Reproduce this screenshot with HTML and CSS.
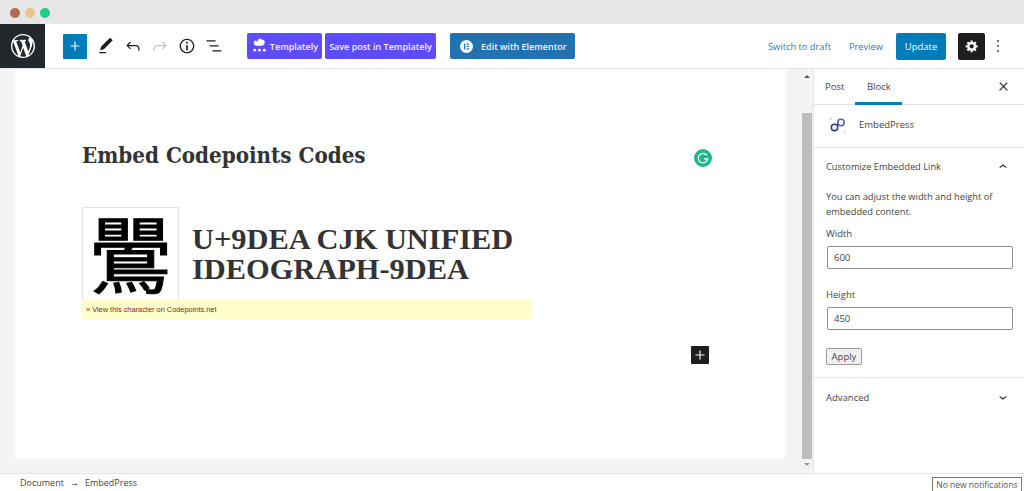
FILE: index.html
```html
<!DOCTYPE html>
<html lang="en">
<head>
  <meta charset="UTF-8" />
  <title>Embed Codepoints Codes</title>
  <link rel="stylesheet" href="styles.css">
</head>
<body>
  <div class="titlebar">
    <span class="light light-red"></span>
    <span class="light light-yellow"></span>
    <span class="light light-green"></span>
  </div>

  <header class="topbar">
    <a class="wp-logo">
      <svg viewBox="0 0 20 20" width="24" height="24"><path fill="#fff" d="M20 10c0-5.51-4.49-10-10-10C4.48 0 0 4.49 0 10c0 5.52 4.48 10 10 10 5.51 0 10-4.48 10-10zM7.78 15.37L4.37 6.22c.55-.02 1.17-.08 1.17-.08.5-.06.44-1.13-.06-1.11 0 0-1.45.11-2.37.11-.18 0-.37 0-.58-.01C4.12 2.69 6.87 1.11 10 1.11c2.33 0 4.45.87 6.05 2.34-.68-.11-1.65.39-1.65 1.58 0 .74.45 1.36.9 2.1.35.61.55 1.36.55 2.46 0 1.49-1.4 5-1.4 5l-3.03-8.37c.54-.02.82-.17.82-.17.5-.05.44-1.25-.06-1.22 0 0-1.44.12-2.38.12-.87 0-2.33-.12-2.33-.12-.5-.03-.56 1.2-.06 1.22l.92.08 1.26 3.41zM17.41 10c.24-.64.74-1.87.43-4.25.7 1.29 1.05 2.71 1.05 4.25 0 3.29-1.73 6.24-4.4 7.78.97-2.59 1.94-5.2 2.92-7.78zM6.1 18.09C3.12 16.65 1.11 13.53 1.11 10c0-1.3.23-2.48.72-3.59C3.25 10.3 4.67 14.2 6.1 18.09zm4.03-6.63l2.58 6.98c-.86.29-1.76.45-2.71.45-.79 0-1.57-.11-2.29-.33.81-2.38 1.62-4.74 2.42-7.1z"/></svg>
    </a>

    <div class="tools">
      <button class="add-btn">
        <svg viewBox="0 0 24 24" width="18" height="18"><path fill="#e8f3f9" d="M18 11.200h-5.200V6h-1.600v5.200H6v1.600h5.200V18h1.600v-5.200H18z"/></svg>
      </button>
      <svg class="tool" viewBox="0 0 24 24" width="20" height="20"><path fill="#1e1e1e" d="M20.100 5.100L16.900 2 6.200 12.700l-1.300 4.400 4.500-1.300L20.100 5.100zM4 20.800h8v-1.500H4v1.500z"/></svg>
      <svg class="tool" viewBox="0 0 24 24" width="20" height="20"><path fill="#1e1e1e" d="M18.300 11.700c-.6-.6-1.400-.9-2.300-.9H6.700l2.900-3.300-1.100-1-4.500 5L8.500 16l1-1-2.700-2.700H16c.5 0 .9.2 1.300.5 1 1 1 3.400 1 4.500v.3h1.500v-.2c0-1.500 0-4.300-1.500-5.700z"/></svg>
      <svg class="tool" viewBox="0 0 24 24" width="20" height="20"><path fill="#c4c7ca" d="M15.600 6.500l-1.100 1 2.900 3.300H8c-.9 0-1.700.3-2.300.9-1.400 1.500-1.400 4.200-1.400 5.600v.2h1.500v-.3c0-1.100 0-3.500 1-4.500.3-.3.7-.5 1.300-.5h9.200L14.500 15l1.100 1.100 4.600-4.600-4.600-5z"/></svg>
      <svg class="tool" viewBox="0 0 24 24" width="20" height="20"><path fill="#1e1e1e" d="M12 3.200c-4.800 0-8.800 3.900-8.800 8.800 0 4.800 3.900 8.800 8.800 8.800 4.800 0 8.800-3.900 8.800-8.800 0-4.800-4-8.800-8.800-8.800zm0 16c-4 0-7.200-3.300-7.200-7.200C4.800 8 8 4.800 12 4.800s7.200 3.300 7.200 7.200c0 4-3.200 7.200-7.200 7.200zM11 17h2v-6h-2v6zm0-8h2V7h-2v2z"/></svg>
      <svg class="tool" viewBox="0 0 24 24" width="20" height="20"><path fill="#1e1e1e" d="M13.800 5.200H3v1.500h10.800V5.200zm-3.600 12v1.500H21v-1.500H10.200zm7.200-6H6.600v1.500h10.800v-1.500z"/></svg>
    </div>

    <button class="purple-btn templately-btn">
      <svg viewBox="0 0 16 16" width="17" height="17"><path fill="#fff" d="M7 1c1-.9 2.300-.5 2.800.4 1.700-.2 3.200 1 3.200 2.700 0 1.800-1.400 3.200-3.200 3.200H5.500C3.800 7.300 2.500 6.200 2.500 4.700c0-1.300 1-2.300 2.200-2.500L6 3.700z"/><circle cx="3.500" cy="11.500" r="1.300" fill="#fff"/><circle cx="8" cy="11.500" r="1.300" fill="#fff"/><circle cx="12.500" cy="11.500" r="1.300" fill="#fff"/></svg>
      Templately
    </button>
    <button class="purple-btn save-btn">Save post in Templately</button>
    <button class="elementor-btn">
      <svg viewBox="0 0 13 13" width="13" height="13"><circle cx="6.500" cy="6.500" r="6.500" fill="#fff"/><path fill="#2271b1" d="M4 3.500h1.200v6H4zM6.500 3.500H9v1.200H6.500zM6.500 5.900H9v1.200H6.500zM6.500 8.300H9v1.200H6.500z"/></svg>
      Edit with Elementor
    </button>

    <div class="actions">
      <a class="link-btn draft-link">Switch to draft</a>
      <a class="link-btn preview-link">Preview</a>
      <button class="update-btn">Update</button>
      <button class="settings-btn">
        <svg viewBox="0 0 20 20" width="14" height="14"><path fill="#fff" d="M18 12h-2.180c-.17.7-.44 1.350-.81 1.930l1.540 1.540-2.100 2.100-1.540-1.540c-.58.36-1.230.63-1.910.79V19H8v-2.180c-.68-.16-1.330-.43-1.910-.79l-1.540 1.540-2.120-2.120 1.540-1.540c-.36-.58-.63-1.230-.79-1.910H1V9.030h2.170c.16-.7.44-1.350.8-1.940L2.430 5.550l2.100-2.100 1.540 1.540c.58-.37 1.240-.64 1.930-.81V2h3v2.180c.68.16 1.330.43 1.910.79l1.540-1.540 2.120 2.120-1.540 1.540c.36.59.64 1.240.8 1.940H18V12zm-8.500 1.500c1.660 0 3-1.340 3-3s-1.340-3-3-3-3 1.340-3 3 1.340 3 3 3z"/></svg>
      </button>
      <svg class="more" viewBox="0 0 24 24" width="20" height="20"><path fill="#1e1e1e" d="M13 19h-2v-2h2v2zm0-6h-2v-2h2v2zm0-6h-2V5h2v2z"/></svg>
    </div>
  </header>

  <div class="main">
    <div class="canvas">
      <div class="paper">
        <h1 class="post-title">Embed Codepoints Codes</h1>
        <span class="grammarly">
          <svg viewBox="0 0 18 18" width="18" height="18"><circle cx="9" cy="9" r="9" fill="#22b88e"/><path fill="none" stroke="#fff" stroke-width="1.200" d="M12.800 6.300A4.700 4.700 0 1 0 13.700 9.800H10"/></svg>
        </span>
        <div class="embed">
          <div class="embed-top">
            <div class="char-box">鷪</div>
            <h2 class="char-name">U+9DEA CJK UNIFIED IDEOGRAPH-9DEA</h2>
          </div>
          <div class="embed-foot">» View this character on Codepoints.net</div>
        </div>
        <button class="inserter">
          <svg viewBox="0 0 24 24" width="18" height="18"><path fill="#eee" d="M18 11.200h-5.200V6h-1.600v5.200H6v1.600h5.200V18h1.600v-5.200H18z"/></svg>
        </button>
      </div>
      <div class="scrollbar">
        <span class="arrow arrow-up"></span>
        <div class="thumb"></div>
        <span class="arrow arrow-down"></span>
      </div>
    </div>

    <aside class="sidebar">
      <div class="tabs">
        <span class="tab">Post</span>
        <span class="tab tab-active">Block</span>
        <svg class="close" viewBox="0 0 24 24" width="13" height="13"><path fill="#1e1e1e" stroke="#1e1e1e" stroke-width=".8" d="M13 11.800l6.100-6.300-1-1-6.100 6.200-6.100-6.200-1 1 6.100 6.300-6.500 6.700 1 1 6.500-6.600 6.500 6.600 1-1z"/></svg>
      </div>
      <div class="block-card">
        <svg viewBox="0 0 18 18" width="18" height="18">
          <circle cx="5.500" cy="11.500" r="3.200" fill="none" stroke="#2f3a8f" stroke-width="1.500"/>
          <circle cx="12" cy="6.500" r="3.200" fill="none" stroke="#5a5fa8" stroke-width="1.500"/>
          <path fill="none" stroke="#3f4a9a" stroke-width="1.500" d="M7.800 9.300l1.800-1.200"/>
          <path fill="none" stroke="#9fb6d8" stroke-width="1" d="M1.500 3.500l1.500-1.500M15 16l1.500-1.500"/>
        </svg>
        <span class="block-name">EmbedPress</span>
      </div>
      <section class="panel">
        <div class="panel-head">
          <span class="panel-title">Customize Embedded Link</span>
          <svg viewBox="0 0 24 24" width="16" height="16"><path fill="#1e1e1e" d="M6.500 12.400L12 8l5.500 4.400-.9 1.200L12 10l-4.500 3.600-1-1.200z"/></svg>
        </div>
        <p class="panel-text">You can adjust the width and height of embedded content.</p>
        <label class="field-label">Width</label>
        <input class="field" type="text" value="600">
        <label class="field-label label-height">Height</label>
        <input class="field" type="text" value="450">
        <button class="apply-btn">Apply</button>
      </section>
      <section class="panel-closed">
        <span>Advanced</span>
        <svg viewBox="0 0 24 24" width="16" height="16"><path fill="#1e1e1e" d="M17.500 11.600L12 16l-5.500-4.400.9-1.200L12 14l4.500-3.600 1 1.200z"/></svg>
      </section>
    </aside>
  </div>

  <footer class="breadcrumbs">
    <span>Document</span>
    <span class="crumb-arrow">→</span>
    <span>EmbedPress</span>
    <span class="tooltip">No new notifications</span>
  </footer>
</body>
</html>
```

FILE: styles.css
```css
* {
  box-sizing: border-box;
}

body {
  margin: 0;
  height: 491px;
  overflow: hidden;
  display: flex;
  flex-direction: column;
  font-family: "Open Sans", "Noto Sans", sans-serif;
  font-size: 10px;
  color: #444;
  background: #fff;
}

button {
  font-family: inherit;
  border: none;
  padding: 0;
}

/* window chrome */
.titlebar {
  height: 24px;
  flex: none;
  background: #e6e6e6;
  display: flex;
  align-items: center;
  gap: 5px;
  padding: 2px 0 0 10px;
}

.light {
  width: 10px;
  height: 10px;
  border-radius: 50%;
}

.light-red { background: #b06a4d; }
.light-yellow { background: #e8c48b; }
.light-green { background: #1fcb8a; }

/* top toolbar */
.topbar {
  height: 45px;
  flex: none;
  display: flex;
  align-items: center;
  border-bottom: 1px solid #e2e4e7;
}

.wp-logo {
  width: 45px;
  height: 44px;
  background: #23282d;
  display: flex;
  align-items: center;
  justify-content: center;
}

.tools {
  display: flex;
  align-items: center;
  margin-left: 18px;
}

.add-btn {
  width: 24px;
  height: 25px;
  border-radius: 1px;
  background: #007cba;
  display: flex;
  align-items: center;
  justify-content: center;
  margin-right: 9px;
}

.tool {
  margin-right: 7px;
}

.purple-btn {
  height: 26px;
  background: #5f4bff;
  color: #f2f0ff;
  border-radius: 2px;
  font-size: 9px;
  font-weight: 600;
  display: flex;
  align-items: center;
  justify-content: center;
}

.templately-btn {
  width: 75px;
  gap: 2px;
  margin-left: 16px;
}

.save-btn {
  width: 111px;
  margin-left: 3px;
}

.elementor-btn {
  width: 125px;
  height: 26px;
  margin-left: 14px;
  background: #2271b1;
  color: #f0f6fb;
  border-radius: 2px;
  font-size: 9px;
  font-weight: 600;
  display: flex;
  align-items: center;
  gap: 8px;
  padding-left: 10px;
}

.actions {
  margin-left: auto;
  display: flex;
  align-items: center;
}

.link-btn {
  color: #2b7ab8;
  font-size: 9.300px;
}

.preview-link {
  margin-left: 18px;
}

.update-btn {
  width: 50px;
  height: 27px;
  margin-left: 13px;
  background: #007cba;
  color: #fff;
  border-radius: 2px;
  font-size: 9.500px;
}

.settings-btn {
  width: 27px;
  height: 27px;
  margin-left: 12px;
  background: #1e1e1e;
  border-radius: 2px;
  display: flex;
  align-items: center;
  justify-content: center;
}

.more {
  margin: 0 16px 0 3px;
}

/* editor area */
.main {
  height: 404px;
  flex: none;
  display: flex;
}

.canvas {
  width: 813px;
  flex: none;
  display: flex;
  align-items: flex-start;
  background: #f4f4f4;
  padding-left: 15px;
}

.paper {
  position: relative;
  width: 771px;
  height: 389px;
  flex: none;
  background: #fff;
  padding: 69px 0 0 67px;
}

.post-title {
  margin: 0;
  font-family: "DejaVu Serif", serif;
  font-stretch: condensed;
  font-size: 22.200px;
  line-height: 34px;
  font-weight: 700;
  color: #333;
}

.grammarly {
  position: absolute;
  left: 679px;
  top: 80px;
  display: flex;
}

.embed {
  width: 449px;
  margin-top: 35px;
}

.embed-top {
  display: flex;
  align-items: center;
  gap: 13px;
  height: 93px;
}

.char-box {
  width: 97px;
  height: 93px;
  flex: none;
  border: 1px solid #e4e4e4;
  border-bottom: none;
  color: #000;
  font-family: "Noto Sans CJK TC", "Noto Sans CJK SC", sans-serif;
  font-weight: 400;
  -webkit-text-stroke: 1px #000;
  font-size: 84px;
  line-height: 86px;
  text-align: center;
}

.char-name {
  margin: 0;
  width: 335px;
  font-family: "Liberation Serif", serif;
  font-size: 30.400px;
  line-height: 30px;
  font-weight: 700;
  color: #333;
}

.embed-foot {
  height: 20px;
  background: #ffc;
  color: #7a1f1f;
  font-family: "Liberation Sans", sans-serif;
  font-size: 7.400px;
  line-height: 20px;
  padding-left: 4px;
}

.inserter {
  display: flex;
  margin: 26px 0 0 609px;
  width: 18px;
  height: 18px;
  background: #1e1e1e;
  border-radius: 1px;
}

.scrollbar {
  width: 27px;
  height: 404px;
  flex: none;
  display: flex;
  flex-direction: column;
  align-items: center;
  padding-left: 16px;
  padding-right: 1px;
}

.thumb {
  width: 10px;
  height: 346px;
  margin-top: 35px;
  background: #bdbdbd;
}

.arrow {
  width: 0;
  height: 0;
  border-left: 3px solid transparent;
  border-right: 3px solid transparent;
}

.arrow-up {
  margin-top: 6px;
  border-bottom: 3px solid #555;
}

.arrow-down {
  margin-top: 4px;
  border-top: 3px solid #999;
}

/* settings sidebar */
.sidebar {
  width: 211px;
  flex: none;
  border-left: 1px solid #e2e4e7;
  color: #444;
}

.tabs {
  height: 36px;
  display: flex;
  align-items: center;
  border-bottom: 1px solid #e2e4e7;
  padding-left: 11px;
  font-size: 9.500px;
}

.tab {
  line-height: 36px;
  height: 36px;
}

.tab-active {
  width: 47px;
  margin-left: 11px;
  text-align: center;
  border-bottom: 3px solid #007cba;
}

.close {
  margin-left: auto;
  margin-right: 14px;
}

.block-card {
  height: 43px;
  display: flex;
  align-items: center;
  gap: 12px;
  padding: 0 0 3px 15px;
  border-bottom: 1px solid #e2e4e7;
}

.block-name {
  font-size: 9.500px;
}

.panel {
  height: 230px;
  padding: 0 11px 0 12px;
  border-bottom: 1px solid #e2e4e7;
}

.panel-head {
  height: 37px;
  display: flex;
  align-items: center;
  justify-content: space-between;
  font-size: 9.300px;
  font-weight: 500;
  padding-right: 2px;
}

.panel-text {
  margin: 4px 0 0;
  font-size: 9.300px;
  line-height: 15px;
  width: 180px;
}

.field-label {
  display: block;
  margin-top: 8px;
  font-size: 9.500px;
  line-height: 14px;
}

.label-height {
  margin-top: 19px;
}

.field {
  display: block;
  width: 186px;
  height: 23px;
  margin: 5px 0 0 1px;
  border: 1px solid #8c8f94;
  border-radius: 2px;
  padding: 0 6px;
  font-family: inherit;
  font-size: 9.500px;
  color: #444;
}

.apply-btn {
  display: block;
  width: 36px;
  height: 17px;
  margin-top: 18px;
  border: 1px solid #999;
  border-radius: 2px;
  background: #f1f1f1;
  color: #444;
  font-size: 9.500px;
}

.panel-closed {
  height: 40px;
  display: flex;
  align-items: center;
  justify-content: space-between;
  padding: 0 13px 2px 12px;
  font-size: 9.500px;
}

/* bottom bar */
.breadcrumbs {
  position: relative;
  flex: 1;
  display: flex;
  align-items: center;
  gap: 6px;
  padding-left: 20px;
  border-top: 1px solid #e2e4e7;
  font-size: 9px;
}

.crumb-arrow {
  color: #222;
  font-weight: 700;
}

.tooltip {
  position: absolute;
  left: 932px;
  top: 3px;
  width: 90px;
  height: 16px;
  border: 1px solid #777;
  background: #fff;
  color: #555;
  font-size: 8.500px;
  line-height: 13px;
  text-align: center;
}
```
